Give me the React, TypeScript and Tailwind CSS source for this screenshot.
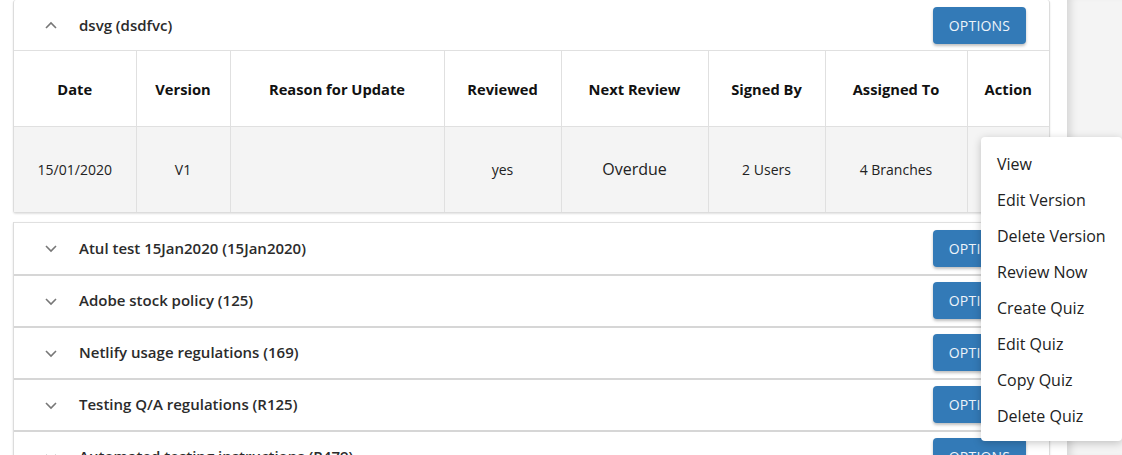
import React from "react";

const font = { fontFamily: '"Open Sans", "Noto Sans", Arial, sans-serif' };

function Chevron({ up }: { up?: boolean }) {
  return (
    <svg width="14" height="10" viewBox="0 0 14 10" className="block">
      <polyline
        points={up ? "2,8 7,3 12,8" : "2,3 7,8 12,3"}
        fill="none"
        stroke="#777"
        strokeWidth="1.6"
      />
    </svg>
  );
}

function OptionsButton() {
  return (
    <button className="h-[37px] w-[93px] rounded-[4px] bg-[#337ab7] text-[14px] tracking-[0.2px] text-[#eef4fa] shadow-[0_2px_3px_rgba(0,0,0,0.25)]">
      OPTIONS
    </button>
  );
}

const cols = [
  { label: "Date", w: 122 },
  { label: "Version", w: 94 },
  { label: "Reason for Update", w: 214 },
  { label: "Reviewed", w: 117 },
  { label: "Next Review", w: 147 },
  { label: "Signed By", w: 117 },
  { label: "Assigned To", w: 142 },
  { label: "Action", w: 82 },
];

const bodyCells = ["15/01/2020", "V1", "", "yes", "Overdue", "2 Users", "4 Branches", ""];

const collapsed = [
  "Atul test 15Jan2020 (15Jan2020)",
  "Adobe stock policy (125)",
  "Netlify usage regulations (169)",
  "Testing Q/A regulations (R125)",
  "Automated testing instructions (R479)",
];

const menu = [
  "View",
  "Edit Version",
  "Delete Version",
  "Review Now",
  "Create Quiz",
  "Edit Quiz",
  "Copy Quiz",
  "Delete Quiz",
];

export default function App() {
  return (
    <div className="relative flex h-[455px] w-[1122px] overflow-hidden bg-white" style={font}>
      <div className="w-[1067px] shrink-0 bg-white pl-[13px] pr-[17px]">
        {/* Expanded card */}
        <div className="rounded-[3px] border-l border-r border-b border-[#dcdcdc] bg-white shadow-[0_1px_2px_rgba(0,0,0,0.12)]">
          <div className="flex h-[50px] items-center pr-[23px]">
            <div className="w-[65px] pl-[30px]">
              <Chevron up />
            </div>
            <div className="flex-1 text-[15px] font-semibold text-[#2b2b2b]">dsvg (dsdfvc)</div>
            <OptionsButton />
          </div>
          <table className="w-full table-fixed border-collapse">
            <colgroup>
              {cols.map((c, i) => (
                <col key={i} style={{ width: c.w }} />
              ))}
            </colgroup>
            <thead>
              <tr className="h-[76px]">
                {cols.map((c, i) => (
                  <th
                    key={i}
                    className={`border-t border-[#e0e0e0] pt-[2px] text-center text-[14.7px] font-bold text-[#111] ${i > 0 ? "border-l" : ""}`}
                  >
                    {c.label}
                  </th>
                ))}
              </tr>
            </thead>
            <tbody>
              <tr className="h-[85px] bg-[#f4f4f4]">
                {bodyCells.map((t, i) => (
                  <td
                    key={i}
                    className={`border-t border-[#e0e0e0] text-center text-[#222] ${i > 0 ? "border-l" : ""} ${t === "Overdue" ? "text-[16px]" : "text-[14px]"}`}
                  >
                    {t}
                  </td>
                ))}
              </tr>
            </tbody>
          </table>
        </div>

        {/* Collapsed cards */}
        <div className="mt-[9px] border-l border-r border-[#dcdcdc] shadow-[0_1px_2px_rgba(0,0,0,0.12)]">
          {collapsed.map((t, i) => (
            <div
              key={i}
              className="flex h-[52px] items-center border-t-2 border-[#d6d6d6] bg-white pr-[23px] first:border-t first:border-[#e0e0e0]"
            >
              <div className="w-[65px] pl-[30px]">
                <Chevron />
              </div>
              <div className="flex-1 text-[15px] font-semibold text-[#2b2b2b]">{t}</div>
              <OptionsButton />
            </div>
          ))}
        </div>
      </div>
      <div className="flex-1 bg-[#f4f4f4] shadow-[inset_9px_0_8px_-6px_rgba(0,0,0,0.14)]" />

      {/* Dropdown menu */}
      <div className="absolute left-[981px] top-[137px] w-[141px] rounded-[4px] bg-white pt-[9px] pb-[7px] shadow-[0_2px_8px_rgba(0,0,0,0.22)]">
        {menu.map((m, i) => (
          <div key={i} className="flex h-[36px] items-center pl-[16px] text-[16px] text-[#222]">
            {m}
          </div>
        ))}
      </div>
    </div>
  );
}
